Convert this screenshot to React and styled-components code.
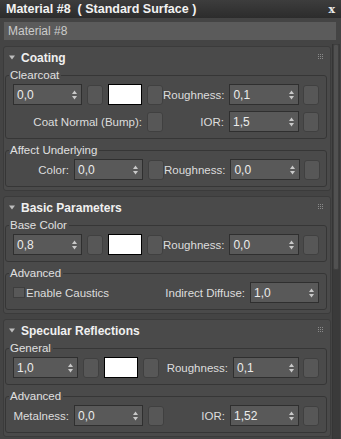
import React from "react";
import styled, { createGlobalStyle } from "styled-components";

const Global = createGlobalStyle`
  html, body { margin: 0; padding: 0; background: #444444; }
  body { font-family: "Liberation Sans", Arial, sans-serif; font-size: 11.5px; }
  * { box-sizing: border-box; }
`;

const Window = styled.div`
  width: 341px;
  height: 439px;
  overflow: hidden;
  background: #444444;
  color: #dcdcdc;
  display: flex;
  flex-direction: column;
`;

const TitleBar = styled.div`
  height: 18px;
  flex: none;
  display: flex;
  align-items: center;
  justify-content: space-between;
  padding: 0 6px 0 6px;
  background: linear-gradient(#3d3d3d, #2c2c2c);
  color: #f2f2f2;
  font-weight: bold;
  font-size: 12.5px;
  white-space: pre;
`;

const CloseX = styled.span`
  font-family: "DejaVu Serif", serif;
  font-weight: bold;
  font-size: 11px;
  color: #e8e8e8;
  margin-right: 0px;
`;

const NameField = styled.div`
  height: 18px;
  flex: none;
  margin: 4px 5px 0 4px;
  background: #5b5b5b;
  color: #cbcbcb;
  padding-left: 4px;
  display: flex;
  align-items: center;
  font-size: 12px;
`;

const Body = styled.div`
  flex: 1;
  display: flex;
  margin-top: 6px;
  min-height: 0;
`;

const RolloutColumn = styled.div`
  width: 331px;
  padding-left: 3px;
  flex: none;
`;

const Scrollbar = styled.div`
  width: 8px;
  margin-left: 1px;
  margin-top: -2px;
  background: #3a3a3a;
  border-left: 1px solid #353535;
  display: flex;
  flex-direction: column;
`;

const Thumb = styled.div`
  height: 226px;
  margin: 0 1px 0 0;
  background: #515151;
  border: 1px solid #3f3f3f;
  border-radius: 2px;
`;

const Rollout = styled.section`
  background: #4a4a4a;
  border: 1px solid #3b3b3b;
  border-radius: 3px;
  padding: 0 3px 3px 1px;
  margin-bottom: 5px;
`;

const RolloutHeader = styled.div`
  height: 21px;
  display: flex;
  align-items: center;
  padding-left: 4px;
  color: #f0f0f0;
  font-weight: bold;
  font-size: 12px;
`;

const HeaderTitle = styled.span`
  flex: 1;
  margin-left: 6px;
`;

const Grip = styled.svg`
  margin-right: 3px;
  margin-top: -2px;
`;

const Group = styled.fieldset`
  margin: ${(p) => (p.$first ? "0" : "4px")} 0 0 0;
  padding: 2px 7px 6px 7px;
  border: 1px solid #363636;
  border-radius: 3px;
  min-width: 0;
  display: flex;
  flex-direction: column;
  gap: 6px;
`;

const Legend = styled.legend`
  margin-left: -4px;
  padding: 0 2px 0 1px;
  height: 14px;
  line-height: 14px;
  color: #e0e0e0;
  font-size: 11.5px;
`;

const Row = styled.div`
  height: 21px;
  display: flex;
  align-items: center;
`;

const Half = styled.div`
  display: flex;
  align-items: center;
  gap: 5px;
  ${(p) => (p.$w ? `width: ${p.$w}px; flex: none;` : "flex: 1;")}
  justify-content: ${(p) => (p.$end ? "flex-end" : "flex-start")};
`;

const Label = styled.span`
  white-space: nowrap;
  color: #dddddd;
`;

const SpinBox = styled.div`
  width: ${(p) => p.$w}px;
  height: 21px;
  flex: none;
  background: #595959;
  border: 1px solid #2f2f2f;
  display: flex;
  align-items: center;
  justify-content: space-between;
  padding: 0 4px 0 3px;
  color: #ececec;
  font-size: 12px;
`;

const Square = styled.div`
  width: 16px;
  height: 20px;
  flex: none;
  background: #575757;
  border: 1px solid #404040;
  border-radius: 3px;
  margin-left: ${(p) => p.$ml || 0}px;
`;

const Swatch = styled.div`
  width: 34px;
  height: 21px;
  flex: none;
  background: #ffffff;
  border: 1px solid #000000;
`;

const Check = styled.div`
  width: 12px;
  height: 11px;
  flex: none;
  background: #585858;
  border: 1px solid #3e3e3e;
`;

const CheckLabel = styled.span`
  margin-left: -4px;
  color: #dddddd;
  white-space: nowrap;
`;

const Arrows = () => (
  <svg width="5" height="10" viewBox="0 0 5 10">
    <path d="M2.5 0.5 L5 4 L0 4 Z" fill="#c9c9c9" />
    <path d="M0 6 L5 6 L2.5 9.5 Z" fill="#c9c9c9" />
  </svg>
);

const Spinner = ({ w = 69, value }) => (
  <SpinBox $w={w}>
    <span>{value}</span>
    <Arrows />
  </SpinBox>
);

const Tri = () => (
  <svg width="6" height="5" viewBox="0 0 6 5">
    <path d="M0 0.5 L6 0.5 L3 4.5 Z" fill="#bdbdbd" />
  </svg>
);

const GripDots = () => (
  <Grip width="6" height="6" viewBox="0 0 6 6">
    {[0, 2, 4].map((y) =>
      [0, 2, 4].map((x) => (
        <rect key={`${x}-${y}`} x={x} y={y} width="1" height="1" fill="#8a8a8a" />
      ))
    )}
  </Grip>
);

const RolloutPanel = ({ title, children }) => (
  <Rollout>
    <RolloutHeader>
      <Tri />
      <HeaderTitle>{title}</HeaderTitle>
      <GripDots />
    </RolloutHeader>
    {children}
  </Rollout>
);

const ColorRow = ({ value, rough, leftW = 150, spinW = 69, roughW = 70 }) => (
  <Row>
    <Half $w={leftW}>
      <Spinner w={spinW} value={value} />
      <Square />
      <Swatch />
      <Square />
    </Half>
    <Half $end>
      <Label>Roughness:</Label>
      <Spinner w={roughW} value={rough} />
      <Square $ml={-1} />
    </Half>
  </Row>
);

const LabeledRight = ({ label, value, w = 70 }) => (
  <Half $end>
    <Label>{label}</Label>
    <Spinner w={w} value={value} />
    <Square $ml={-1} />
  </Half>
);

export default function App() {
  return (
    <>
      <Global />
      <Window>
        <TitleBar>
          <span>{"Material #8  ( Standard Surface )"}</span>
          <CloseX>x</CloseX>
        </TitleBar>
        <NameField>Material #8</NameField>
        <Body>
          <RolloutColumn>
            <RolloutPanel title="Coating">
              <Group $first>
                <Legend>Clearcoat</Legend>
                <ColorRow value="0,0" rough="0,1" />
                <Row>
                  <Half $w={150} $end>
                    <Label>Coat Normal (Bump):</Label>
                    <Square />
                  </Half>
                  <LabeledRight label="IOR:" value="1,5" />
                </Row>
              </Group>
              <Group>
                <Legend>Affect Underlying</Legend>
                <Row>
                  <Half $w={151} $end>
                    <Label>Color:</Label>
                    <Spinner w={69} value="0,0" />
                    <Square />
                  </Half>
                  <LabeledRight label="Roughness:" value="0,0" />
                </Row>
              </Group>
            </RolloutPanel>

            <RolloutPanel title="Basic Parameters">
              <Group $first>
                <Legend>Base Color</Legend>
                <ColorRow value="0,8" rough="0,0" />
              </Group>
              <Group>
                <Legend>Advanced</Legend>
                <Row>
                  <Half $w={150}>
                    <Check />
                    <CheckLabel>Enable Caustics</CheckLabel>
                  </Half>
                  <Half $end>
                    <Label>Indirect Diffuse:</Label>
                    <Spinner w={69} value="1,0" />
                  </Half>
                </Row>
              </Group>
            </RolloutPanel>

            <RolloutPanel title="Specular Reflections">
              <Group $first>
                <Legend>General</Legend>
                <ColorRow value="1,0" rough="0,1" leftW={146} spinW={65} roughW={66} />
              </Group>
              <Group>
                <Legend>Advanced</Legend>
                <Row>
                  <Half $w={151} $end>
                    <Label>Metalness:</Label>
                    <Spinner w={69} value="0,0" />
                    <Square />
                  </Half>
                  <LabeledRight label="IOR:" value="1,52" w={69} />
                </Row>
              </Group>
            </RolloutPanel>
          </RolloutColumn>
          <Scrollbar>
            <Thumb />
          </Scrollbar>
        </Body>
      </Window>
    </>
  );
}
